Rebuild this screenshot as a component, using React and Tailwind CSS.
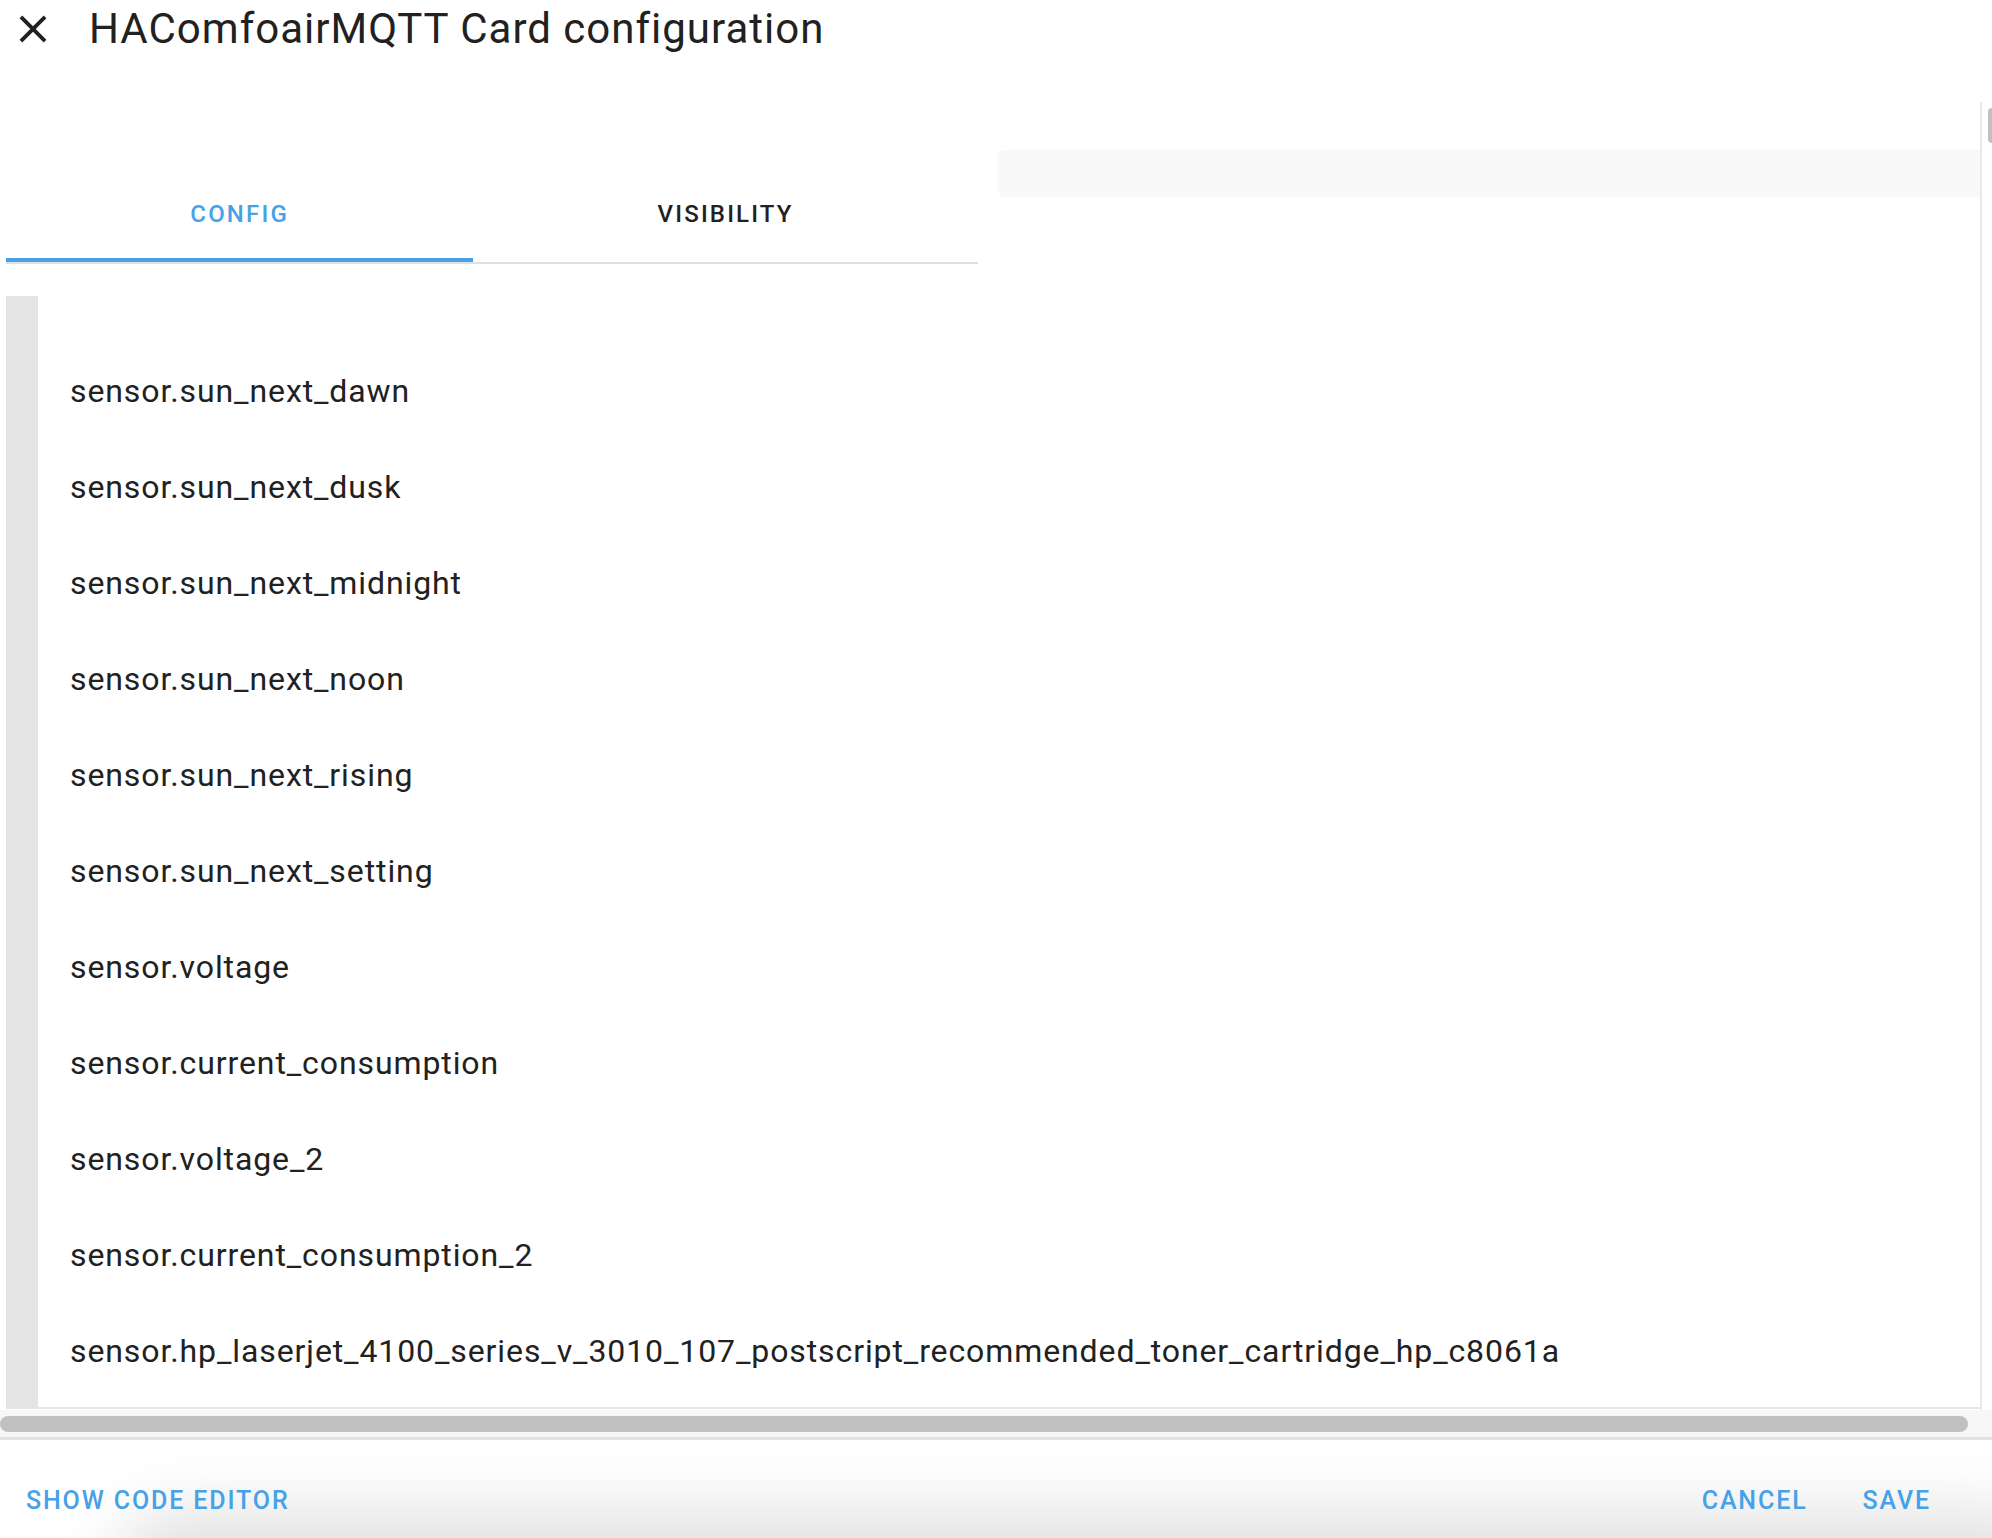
const entities = [
  "sensor.sun_next_dawn",
  "sensor.sun_next_dusk",
  "sensor.sun_next_midnight",
  "sensor.sun_next_noon",
  "sensor.sun_next_rising",
  "sensor.sun_next_setting",
  "sensor.voltage",
  "sensor.current_consumption",
  "sensor.voltage_2",
  "sensor.current_consumption_2",
  "sensor.hp_laserjet_4100_series_v_3010_107_postscript_recommended_toner_cartridge_hp_c8061a",
];

const CloseIcon = () => (
  <svg viewBox="0 0 24 24" className="w-[46px] h-[46px]" fill="#212121">
    <path d="M19,6.41L17.59,5L12,10.59L6.41,5L5,6.41L10.59,12L5,17.59L6.41,19L12,13.41L17.59,19L19,17.59L13.41,12L19,6.41Z" />
  </svg>
);

const Tab = ({ label, active }) => (
  <div className="relative flex-auto h-[96px] flex items-center justify-center">
    <span
      className={`text-[24px] font-medium tracking-[0.09em] ${
        active ? "text-[#46a1e8]" : "text-[#212121]"
      }`}
    >
      {label}
    </span>
    {active && <div className="absolute left-0 right-0 bottom-0 h-[4px] bg-[#46a1e8]" />}
  </div>
);

export default function App() {
  return (
    <div
      className="w-[1992px] h-[1538px] bg-white overflow-hidden flex flex-col text-[#212121]"
      style={{ fontFamily: "Roboto, 'Noto Sans', sans-serif" }}
    >
      {/* header */}
      <div className="h-[102px] shrink-0">
        <div className="h-[58px] flex items-center pl-[10px]">
          <CloseIcon />
          <h1 className="ml-[33px] text-[42px] leading-none font-normal tracking-[1px]">
            HAComfoairMQTT Card configuration
          </h1>
        </div>
      </div>

      {/* body */}
      <div className="flex h-[1308px] shrink-0">
        <div className="flex-1 flex flex-col">
          <div className="flex">
            <div className="w-[972px] ml-[6px] mt-[64px]">
              <div className="flex border-b-2 border-[#e0e0e0]">
                <Tab label="CONFIG" active />
                <Tab label="VISIBILITY" />
              </div>
            </div>
            <div className="flex-1 ml-[20px] mt-[48px] h-[47px] bg-[#f9f9f9] rounded-l-[6px]" />
          </div>

          <div className="mt-[32px] ml-[6px] flex border-b-2 border-[#e6e6e6]">
            <div className="w-[32px] bg-[#e4e4e4] shrink-0" />
            <div className="flex-1 pl-[32px] pt-[47px] pb-[8px]">
              {entities.map((e) => (
                <div
                  key={e}
                  className="h-[96px] flex items-center text-[32px] tracking-[0.9px] whitespace-nowrap"
                >
                  {e}
                </div>
              ))}
            </div>
          </div>
        </div>

        {/* vertical scrollbar */}
        <div className="w-[12px] shrink-0 border-l-2 border-[#e8e8e8] flex justify-end">
          <div className="mt-[6px] w-[4px] h-[35px] bg-[#c1c1c1] rounded-l-[4px]" />
        </div>
      </div>

      {/* horizontal scrollbar */}
      <div className="bg-[#f7f7f7] pt-[6px] pb-[5px] border-b-[3px] border-[#e2e2e2] shrink-0">
        <div className="h-[16px] w-[1968px] bg-[#c1c1c1] rounded-full" />
      </div>

      {/* footer */}
      <div className="relative flex-1 overflow-hidden bg-white">
        <div className="absolute left-[140px] right-[-40px] top-[100%] h-[100px] rounded-[40px] shadow-[0_0_70px_25px_rgba(0,0,0,0.13)]" />
        <div className="relative flex items-center h-full pt-[24px] pl-[26px] pr-[61px] text-[25px] font-medium tracking-[0.075em] text-[#46a1e8]">
          <span>SHOW CODE EDITOR</span>
          <span className="ml-auto">CANCEL</span>
          <span className="ml-[55px]">SAVE</span>
        </div>
      </div>
    </div>
  );
}
